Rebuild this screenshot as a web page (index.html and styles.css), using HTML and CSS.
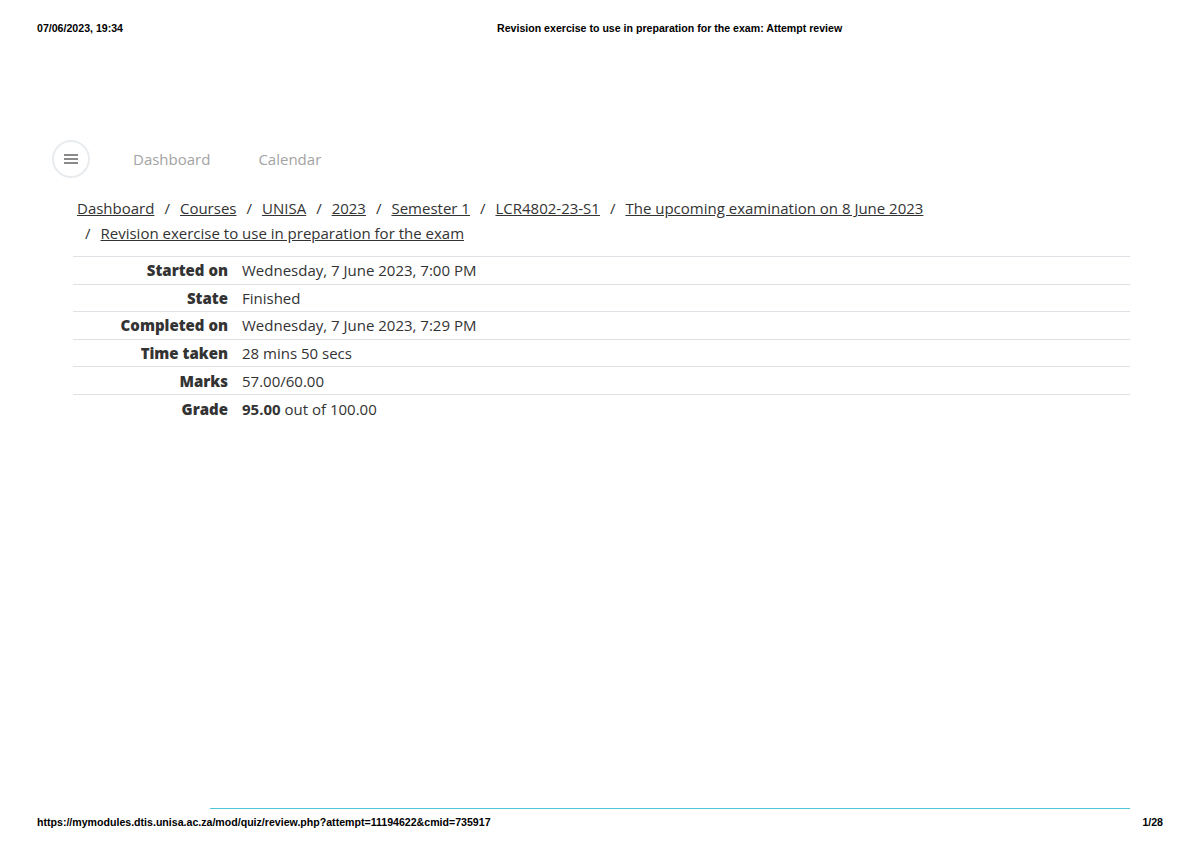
FILE: index.html
```html
<!DOCTYPE html>
<html lang="en">
<head>
  <meta charset="UTF-8">
  <title>Revision exercise to use in preparation for the exam: Attempt review</title>
  <link rel="stylesheet" href="styles.css">
</head>
<body>
  <div class="print-head">
    <span class="print-date">07/06/2023, 19:34</span>
    <span class="print-title">Revision exercise to use in preparation for the exam: Attempt review</span>
  </div>

  <div class="page">
    <div class="navbar">
      <button class="menu-btn" aria-label="menu">
        <svg width="14" height="10" viewBox="0 0 14 10">
          <rect x="0" y="0" width="14" height="2" fill="#8a8a8a"/>
          <rect x="0" y="4" width="14" height="2" fill="#8a8a8a"/>
          <rect x="0" y="8" width="14" height="2" fill="#8a8a8a"/>
        </svg>
      </button>
      <a class="nav-link" href="#">Dashboard</a>
      <a class="nav-link" href="#">Calendar</a>
    </div>

    <ol class="breadcrumb">
      <li><a href="#">Dashboard</a></li>
      <li><span class="sep">/</span><a href="#">Courses</a></li>
      <li><span class="sep">/</span><a href="#">UNISA</a></li>
      <li><span class="sep">/</span><a href="#">2023</a></li>
      <li><span class="sep">/</span><a href="#">Semester 1</a></li>
      <li><span class="sep">/</span><a href="#">LCR4802-23-S1</a></li>
      <li><span class="sep">/</span><a href="#">The upcoming examination on 8 June 2023</a></li>
      <li><span class="sep">/</span><a href="#">Revision exercise to use in preparation for the exam</a></li>
    </ol>

    <table class="summary">
      <tr><th>Started on</th><td>Wednesday, 7 June 2023, 7:00 PM</td></tr>
      <tr><th>State</th><td>Finished</td></tr>
      <tr><th>Completed on</th><td>Wednesday, 7 June 2023, 7:29 PM</td></tr>
      <tr><th>Time taken</th><td>28 mins 50 secs</td></tr>
      <tr><th>Marks</th><td>57.00/60.00</td></tr>
      <tr><th>Grade</th><td><b>95.00</b> out of 100.00</td></tr>
    </table>
  </div>

  <div class="print-foot">
    <div class="foot-line"></div>
    <div class="foot-row">
      <span>https://mymodules.dtis.unisa.ac.za/mod/quiz/review.php?attempt=11194622&amp;cmid=735917</span>
      <span>1/28</span>
    </div>
  </div>
</body>
</html>
```

FILE: styles.css
```css
body {
  margin: 0;
  height: 849px;
  display: flex;
  flex-direction: column;
  background: #fff;
  color: #333;
  font-family: 'Open Sans', 'Noto Sans', sans-serif;
}
.print-head, .foot-row {
  font-family: 'Liberation Sans', Arial, sans-serif;
  font-size: 10.6px;
  font-weight: bold;
  line-height: 12px;
  color: #000;
}
.print-head {
  display: flex;
  padding: 22px 37px 0 37px;
}
.print-date {
  width: 460px;
}
.page {
  padding: 0 70px 0 73px;
}
.navbar {
  display: flex;
  align-items: center;
  margin-top: 106px;
  height: 38px;
  margin-left: -21px;
}
.menu-btn {
  width: 38px;
  height: 38px;
  border-radius: 50%;
  border: 2px solid #e9ecef;
  background: #fff;
  display: flex;
  align-items: center;
  justify-content: center;
  padding: 0;
  margin-right: 43px;
}
.nav-link {
  color: #a3a3a3;
  text-decoration: none;
  font-size: 15px;
  margin-right: 48px;
}
.breadcrumb {
  list-style: none;
  display: flex;
  flex-wrap: wrap;
  margin: 18px 0 0 0;
  padding: 0 0 0 4px;
  font-size: 15px;
  line-height: 25px;
}
.breadcrumb li {
  white-space: nowrap;
}
.breadcrumb a {
  color: #333;
  text-decoration: underline;
}
.breadcrumb .sep {
  padding: 0 10px;
}
.breadcrumb li:last-child .sep {
  padding-left: 8px;
}
.summary {
  width: 100%;
  margin-top: 10px;
  border-collapse: collapse;
  font-size: 15px;
}
.summary tr {
  border-top: 1px solid #dee2e6;
  height: 27.6px;
}
.summary th {
  width: 155px;
  text-align: right;
  font-weight: 800;
  padding: 0 14px 0 0;
}
.summary td {
  padding: 0;
}
.print-foot {
  margin-top: auto;
  padding-bottom: 21px;
}
.foot-line {
  height: 1px;
  background: #4fc6d9;
  margin: 0 70px 7px 210px;
}
.foot-row {
  display: flex;
  justify-content: space-between;
  padding: 0 37px;
}
```
